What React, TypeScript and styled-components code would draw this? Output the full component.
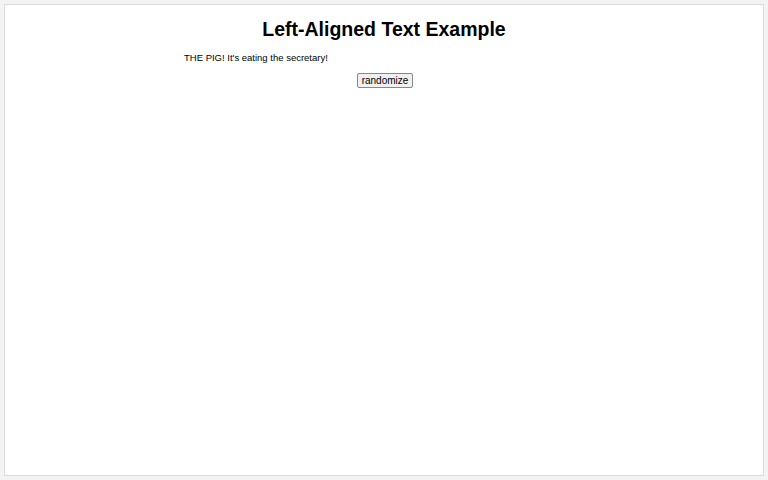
import React, { useState } from "react";
import styled, { createGlobalStyle } from "styled-components";

const GlobalStyle = createGlobalStyle`
  html, body {
    margin: 0;
    padding: 0;
    background: #f3f3f3;
  }
  body {
    font-family: "Liberation Sans", Arial, sans-serif;
  }
`;

const Page = styled.div`
  padding: 4px;
  height: 480px;
  box-sizing: border-box;
`;

const Card = styled.main`
  height: 100%;
  box-sizing: border-box;
  background: #fff;
  border: 1px solid #dcdcdc;
  display: flex;
  flex-direction: column;
  align-items: center;
`;

const Title = styled.h1`
  margin: 13px 0 0;
  font-size: 19.5px;
  line-height: 23px;
  font-weight: bold;
  color: #000;
`;

const TextBox = styled.div`
  width: 400px;
  margin-top: 11px;
  text-align: left;
  font-size: 9.5px;
  line-height: 12px;
  color: #000;
`;

const Button = styled.button`
  margin: 9px 0 0 2px;
  font-family: "Liberation Sans", Arial, sans-serif;
  font-size: 10px;
  line-height: 11px;
  padding: 1px 4px;
  background: #f0f0f0;
  border: 1px solid #888;
  border-radius: 2px;
  color: #000;
`;

const lines = [
  "THE PIG! It's eating the secretary!",
  "Nobody move. The llama is judging us.",
  "Somebody fed the stapler after midnight.",
];

export default function App() {
  const [index, setIndex] = useState(0);

  return (
    <>
      <GlobalStyle />
      <Page>
        <Card>
          <Title>Left-Aligned Text Example</Title>
          <TextBox>{lines[index]}</TextBox>
          <Button onClick={() => setIndex((index + 1) % lines.length)}>
            randomize
          </Button>
        </Card>
      </Page>
    </>
  );
}
